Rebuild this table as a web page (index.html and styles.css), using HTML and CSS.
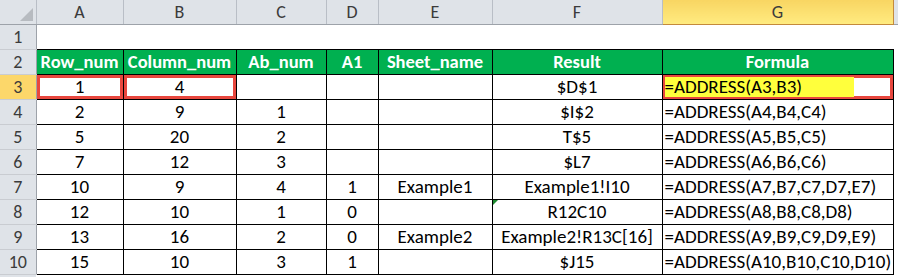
FILE: index.html
```html
<!DOCTYPE html>
<html>
<head>
<meta charset="utf-8">
<link rel="stylesheet" href="styles.css">
</head>
<body>
<table class="sheet">
  <colgroup>
    <col class="c-rh"><col class="c-a"><col class="c-b"><col class="c-c"><col class="c-d"><col class="c-e"><col class="c-f"><col class="c-g"><col class="c-h">
  </colgroup>
  <tr class="colhead">
    <th class="corner"><span class="tri"></span></th>
    <th>A</th><th>B</th><th>C</th><th>D</th><th>E</th><th>F</th><th class="sel">G</th><th class="hcol"></th>
  </tr>
  <tr class="blank">
    <th class="rh">1</th><td></td><td></td><td></td><td></td><td></td><td></td><td></td><td class="h"></td>
  </tr>
  <tr class="head">
    <th class="rh">2</th><td>Row_num</td><td>Column_num</td><td>Ab_num</td><td>A1</td><td>Sheet_name</td><td>Result</td><td>Formula</td><td class="h"></td>
  </tr>
  <tr class="data">
    <th class="rh rsel">3</th><td class="red">1</td><td class="red">4</td><td></td><td></td><td></td><td>$D$1</td><td class="fx red"><span class="hl">=ADDRESS(A3,B3)</span></td><td class="h"></td>
  </tr>
  <tr class="data">
    <th class="rh">4</th><td>2</td><td>9</td><td>1</td><td></td><td></td><td>$I$2</td><td class="fx">=ADDRESS(A4,B4,C4)</td><td class="h"></td>
  </tr>
  <tr class="data">
    <th class="rh">5</th><td>5</td><td>20</td><td>2</td><td></td><td></td><td>T$5</td><td class="fx">=ADDRESS(A5,B5,C5)</td><td class="h"></td>
  </tr>
  <tr class="data">
    <th class="rh">6</th><td>7</td><td>12</td><td>3</td><td></td><td></td><td>$L7</td><td class="fx">=ADDRESS(A6,B6,C6)</td><td class="h"></td>
  </tr>
  <tr class="data">
    <th class="rh">7</th><td>10</td><td>9</td><td>4</td><td>1</td><td>Example1</td><td>Example1!I10</td><td class="fx">=ADDRESS(A7,B7,C7,D7,E7)</td><td class="h"></td>
  </tr>
  <tr class="data">
    <th class="rh">8</th><td>12</td><td>10</td><td>1</td><td>0</td><td></td><td class="err">R12C10</td><td class="fx">=ADDRESS(A8,B8,C8,D8)</td><td class="h"></td>
  </tr>
  <tr class="data">
    <th class="rh">9</th><td>13</td><td>16</td><td>2</td><td>0</td><td>Example2</td><td>Example2!R13C[16]</td><td class="fx">=ADDRESS(A9,B9,C9,D9,E9)</td><td class="h"></td>
  </tr>
  <tr class="data">
    <th class="rh">10</th><td>15</td><td>10</td><td>3</td><td>1</td><td></td><td>$J15</td><td class="fx">=ADDRESS(A10,B10,C10,D10)</td><td class="h"></td>
  </tr>
  <tr class="tail">
    <th class="rh"></th><td></td><td></td><td></td><td></td><td></td><td></td><td></td><td class="h"></td>
  </tr>
</table>
</body>
</html>
```
FILE: styles.css
```css
html, body {
  margin: 0;
  padding: 0;
  background: #ffffff;
  overflow: hidden;
}
.sheet {
  border-collapse: collapse;
  table-layout: fixed;
  width: 905px;
  font-family: Carlito, Calibri, Lato, "Open Sans", sans-serif;
  font-size: 19px;
  color: #000;
}
.c-rh { width: 36px; }
.c-a { width: 87px; }
.c-b { width: 113px; }
.c-c { width: 90px; }
.c-d { width: 52px; }
.c-e { width: 114px; }
.c-f { width: 170px; }
.c-g { width: 231px; }
.c-h { width: 12px; }

.sheet th, .sheet td {
  padding: 0;
  height: 24px;
  line-height: 24px;
  text-align: center;
  white-space: nowrap;
  overflow: hidden;
}
.colhead th {
  background: #dfe3e8;
  color: #3b3b3b;
  font-weight: normal;
  font-size: 18px;
  border-right: 1px solid #b9bec6;
  border-bottom: 1px solid #9da2a9;
}
.colhead th.sel {
  background: linear-gradient(#f8d562, #ffeb80);
  border-bottom: 1px solid #c48a3b;
  border-left: 1px solid #c48a3b;
  border-right: 1px solid #c48a3b;
}
.corner {
  position: relative;
}
.tri {
  position: absolute;
  right: 3px;
  bottom: 3px;
  width: 0;
  height: 0;
  border-left: 13px solid transparent;
  border-bottom: 13px solid #b7bbc0;
}
.rh {
  background: #dfe3e8;
  color: #3b3b3b;
  font-weight: normal;
  font-size: 18px;
  border-right: 1px solid #9da2a9;
  border-bottom: 1px solid #c9ccd1;
}
.rh.rsel {
  background: #fcd76a;
  color: #3b3b3b;
}
.blank td {
  border: none;
}
.head td {
  background: #00b050;
  color: #ffffff;
  font-weight: bold;
  border: 1px solid #000;
  font-size: 18.5px;
}
.data td {
  border: 1px solid #000;
}
.sheet td.h {
  border: none;
  border-left: 1px solid #000;
  background: #fff;
}
.blank td.h, .tail td.h {
  border-left: none;
}
.tail td, .tail th {
  border: none;
  height: 2px;
  line-height: 2px;
}
.data td.fx {
  text-align: left;
  padding-left: 2px;
  overflow: visible;
}
td.red {
  box-shadow: inset 0 0 0 3px #e8473e;
}
.hl {
  display: inline-block;
  background: #ffff3c;
  width: 189px;
  height: 20px;
  line-height: 20px;
  vertical-align: top;
  margin-top: 2px;
}
td.err {
  position: relative;
}
td.err::before {
  content: "";
  position: absolute;
  left: 0;
  top: 0;
  border-top: 5px solid #1d8a2f;
  border-right: 5px solid transparent;
}
```
